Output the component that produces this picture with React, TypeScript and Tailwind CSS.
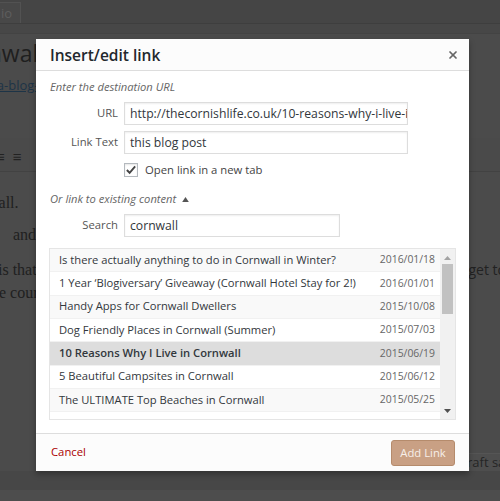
import { X } from "lucide-react";

const posts = [
  { title: "Is there actually anything to do in Cornwall in Winter?", date: "2016/01/18" },
  { title: "1 Year \u2018Blogiversary\u2019 Giveaway (Cornwall Hotel Stay for 2!)", date: "2016/01/01" },
  { title: "Handy Apps for Cornwall Dwellers", date: "2015/10/08" },
  { title: "Dog Friendly Places in Cornwall (Summer)", date: "2015/07/03" },
  { title: "10 Reasons Why I Live in Cornwall", date: "2015/06/19", selected: true },
  { title: "5 Beautiful Campsites in Cornwall", date: "2015/06/12" },
  { title: "The ULTIMATE Top Beaches in Cornwall", date: "2015/05/25" },
  { title: "Cornish Pasty Week", date: "2015/05/11" },
];

const Editor = () => (
  <div className="flex flex-col h-full">
    <div className="h-[24px] bg-[#454545] border-b border-[#3e3e3e] flex items-end">
      <div className="ml-[-6px] h-[21px] pl-[6px] pr-[8px] border border-b-0 border-[#525252] bg-[#484848] text-[13px] leading-[20px] text-[#5e5e5e]">
        io
      </div>
    </div>
    <div className="h-[10px] bg-[#474747] border-b border-[#434343]" />
    <div className="h-[30px] mt-[4px] ml-[-50px] text-[23px] leading-[30px] text-[#1f1f1f] whitespace-nowrap">
      Cornwall
    </div>
    <div className="mt-[8px] ml-[-38px] text-[13px] leading-[18px] text-[#1d3447] underline whitespace-nowrap">
      write-a-blog-post
    </div>
    <div className="mt-[44px] h-[34px] bg-[#4a4a4a] border-b border-[#424242] flex items-center gap-[8px] pl-[2px] pt-[4px] text-[#222]">
      <span className="text-[15px] ml-[-6px]">{"\u2261"}</span>
      <span className="text-[15px]">{"\u2261"}</span>
    </div>
    <div className="flex-1 pt-[19px] font-['Liberation_Serif',serif] text-[16px] leading-[23px] text-[#202020] whitespace-nowrap">
      <div className="ml-[-13px]">wall.</div>
      <div className="mt-[9px] ml-[13px]">and I</div>
      <div className="mt-[12px] flex justify-between">
        <span className="ml-[-2px]">is that</span>
        <span className="mr-[-6px] font-['Open_Sans',sans-serif] text-[14px] text-[#222]">get to</span>
      </div>
      <div className="ml-[-1px]">e cour</div>
    </div>
    <div className="h-[18px] flex justify-end">
      <div className="w-[40px] bg-[#4e4e4e] border-t border-l border-[#555] text-[13px] leading-[17px] text-[#252525] pl-[6px] whitespace-nowrap overflow-hidden">
        raft saved
      </div>
    </div>
    <div className="h-[19px] bg-[#474747]" />
    <div className="flex-1 max-h-[11px] bg-[#4d4d4d]" />
  </div>
);

const Checkbox = () => (
  <span className="w-[14px] h-[14px] border border-[#b4b9be] bg-white shadow-[inset_0_1px_2px_rgba(0,0,0,0.1)] flex items-center justify-center">
    <svg width="12" height="12" viewBox="0 0 13 13">
      <path d="M2 6.5 L5 9.5 L11 2.5" fill="none" stroke="#444" strokeWidth="2" />
    </svg>
  </span>
);

export default function App() {
  return (
    <div className="relative w-[500px] h-[501px] overflow-hidden bg-[#4b4b4b] font-['Open_Sans',sans-serif]">
      <Editor />

      <div className="absolute left-[36px] top-[39px] w-[433px] h-[432px] bg-white shadow-[0_3px_6px_rgba(0,0,0,0.3)] flex flex-col">
        <div className="h-[32px] bg-[#fcfcfc] border-b border-[#dddddd] flex items-center justify-between pl-[14px] pr-[10px]">
          <span className="text-[15.5px] font-semibold text-[#23282d] leading-[22px]">Insert/edit link</span>
          <X size={12} strokeWidth={3.5} className="text-[#666]" />
        </div>

        <div className="flex-1 px-[13px] pt-[6px]">
          <div className="ml-[1px] text-[11.2px] italic leading-[20px] text-[#666]">Enter the destination URL</div>

          <div className="mt-[5px] flex items-center h-[23px]">
            <span className="w-[69px] text-right text-[11.3px] text-[#555]">URL</span>
            <div className="ml-[6px] w-[284px] h-[23px] border border-[#dddddd] bg-white pl-[5px] text-[12.2px] leading-[21px] text-[#32373c] whitespace-nowrap overflow-hidden shadow-[inset_0_1px_2px_rgba(0,0,0,0.07)]">
              http://thecornishlife.co.uk/10-reasons-why-i-live-in-cornwall/
            </div>
          </div>

          <div className="mt-[6px] flex items-center h-[23px]">
            <span className="w-[69px] text-right text-[11.3px] text-[#555]">Link Text</span>
            <div className="ml-[6px] w-[284px] h-[23px] border border-[#dddddd] bg-white pl-[5px] text-[12.2px] leading-[21px] text-[#32373c] whitespace-nowrap overflow-hidden shadow-[inset_0_1px_2px_rgba(0,0,0,0.07)]">
              this blog post
            </div>
          </div>

          <div className="mt-[8px] h-[16px] flex items-center pl-[75px] gap-[7px]">
            <Checkbox />
            <span className="text-[11.3px] text-[#444]">Open link in a new tab</span>
          </div>

          <div className="mt-[11px] ml-[1px] flex items-center gap-[6px] leading-[20px]">
            <span className="text-[11.2px] italic text-[#666]">Or link to existing content</span>
            <svg width="7" height="5" viewBox="0 0 8 6">
              <polygon points="4,0 8,6 0,6" fill="#555" />
            </svg>
          </div>

          <div className="mt-[5px] flex items-center h-[23px]">
            <span className="w-[69px] text-right text-[11.3px] text-[#555]">Search</span>
            <div className="ml-[6px] w-[216px] h-[23px] border border-[#dddddd] bg-white pl-[5px] text-[12.2px] leading-[21px] text-[#32373c] shadow-[inset_0_1px_2px_rgba(0,0,0,0.07)]">
              cornwall
            </div>
          </div>

          <div className="mt-[11px] h-[172px] border border-[#e5e5e5] bg-white flex overflow-hidden">
            <div className="flex-1 flex flex-col">
              {posts.map((p, i) => (
                <div
                  key={p.title}
                  className={`h-[23.33px] shrink-0 border-b border-[#f1f1f1] flex items-center justify-between pl-[9px] pr-[5px] text-[11.2px] whitespace-nowrap ${
                    p.selected ? "bg-[#dddddd] font-semibold" : i % 2 === 0 ? "bg-[#f9f9f9]" : "bg-white"
                  }`}
                >
                  <span className="text-[#32373c]">{p.title}</span>
                  <span className="text-[10.4px] text-[#666] font-normal">{p.date}</span>
                </div>
              ))}
            </div>
            <div className="w-[15px] bg-[#f1f1f1] flex flex-col items-center">
              <svg width="7" height="4" viewBox="0 0 7 4" className="mt-[7px]">
                <polygon points="3.5,0 7,4 0,4" fill="#a3a3a3" />
              </svg>
              <div className="mt-[4px] w-[11px] h-[50px] bg-[#c1c1c1]" />
              <div className="flex-1" />
              <svg width="7" height="4" viewBox="0 0 7 4" className="mb-[6px]">
                <polygon points="0,0 7,0 3.5,4" fill="#505050" />
              </svg>
            </div>
          </div>
        </div>

        <div className="h-[38px] bg-[#fcfcfc] border-t border-[#dddddd] flex items-center justify-between pl-[15px] pr-[14px]">
          <span className="text-[11.3px] text-[#a00]">Cancel</span>
          <div className="w-[64px] h-[26px] rounded-[3px] bg-[#c9a084] border border-[#b58b6c] text-[11.3px] leading-[24px] text-center text-[#f7efe9]">
            Add Link
          </div>
        </div>
      </div>
    </div>
  );
}
